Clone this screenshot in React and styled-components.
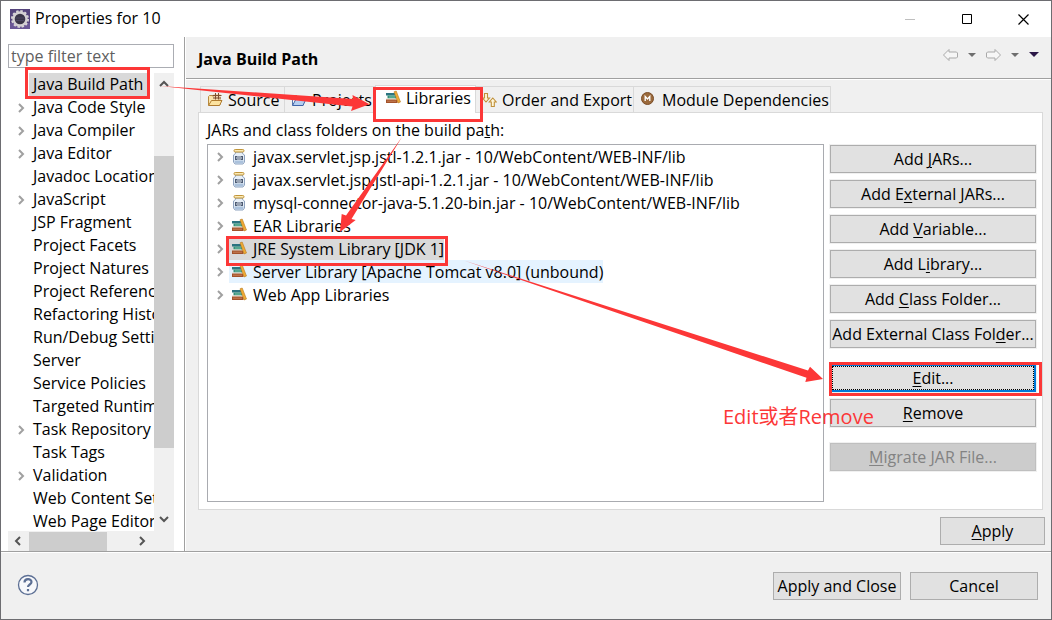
import React from 'react';
import styled, { createGlobalStyle } from 'styled-components';

const Global = createGlobalStyle`
  * { box-sizing: border-box; }
  body { margin: 0; background: #fff; color: #000; font-family: "Open Sans", "Noto Sans CJK SC", sans-serif; font-size: 16px; }
  button, input { font: inherit; color: inherit; }
  svg { display: block; flex: none; }
`;
const Window = styled.div`
  position: relative; display: flex; flex-direction: column; height: 100vh; border: 1px solid #6d6d71; background: #f0f0f0; overflow: hidden;
`;
const TitleBar = styled.header`
  display: flex; align-items: center; height: 36px; padding: 0 8px 0 9px; background: #fff;
  h1 { flex: 1; margin: 0 0 2px 5px; font-size: 16px; font-weight: 400; }
`;
const Caption = styled.button`
  display: grid; place-items: center; width: 57px; height: 34px; padding: 0; border: 0; background: none;
  &:last-child { margin-right: -9px; }
`;
const Body = styled.div` display: flex; flex: 1; min-height: 0; `;
const Side = styled.aside`
  display: flex; flex-direction: column; width: 184px; padding: 7px 10px 0 7px; background: #fff; border-right: 1px solid #a0a0a0;
`;
const Filter = styled.input`
  width: 100%; height: 24px; padding: 0 2px; border: 1px solid #abadb3; border-radius: 0; outline: 0; background: #fff;
  &::placeholder { color: #5f5f5f; opacity: 1; }
`;
const TreeWrap = styled.div` display: flex; flex: 1; min-height: 0; margin-top: 5px; `;
const Tree = styled.ul` flex: 1; min-width: 0; margin: 0; padding: 0; list-style: none; overflow: hidden; `;
const TreeRow = styled.li`
  display: flex; align-items: center; height: 23px; white-space: nowrap;
  span { padding: 0 4px; line-height: 23px; background: ${p => p.$on ? '#d9d9d9' : 'none'}; }
`;
const Twisty = styled.div`
  display: flex; flex: none; align-items: center; justify-content: center; width: ${p => p.$w}px; padding-left: ${p => p.$inset || 0}px;
`;
const VBar = styled.div`
  display: flex; flex-direction: column; align-items: center; justify-content: space-between; width: 20px; padding: 6px 0 7px; background: #f0f0f0;
`;
const VThumb = styled.div` width: 20px; height: 292px; margin-top: 1px; background: #cdcdcd; `;
const HBar = styled.div` display: flex; align-items: center; height: 20px; padding: 0 27px 0 5px; background: #f0f0f0; `;
const HThumb = styled.div` width: 78px; height: 19px; margin: 0 auto 0 6px; background: #cdcdcd; `;
const Main = styled.main` display: flex; flex: 1; flex-direction: column; min-width: 0; border-left: 1px solid #fff; `;
const Head = styled.div`
  display: flex; align-items: center; justify-content: space-between; height: 42px; padding: 0 12px; border-bottom: 1px solid #a0a0a0; box-shadow: 0 1px #fff;
  h2 { margin: 2px 0 0; font-size: 16px; font-weight: 700; }
`;
const Nav = styled.div`
  display: flex; align-items: center; gap: 10px; margin-bottom: 6px;
  button { display: block; padding: 0; border: 0; background: none; }
`;
const Content = styled.div` display: flex; flex: 1; flex-direction: column; min-height: 0; padding: 5px 6px 6px 12px; `;
const Tabs = styled.div` display: flex; align-items: flex-end; height: 28px; padding-left: 2px; `;
const Tab = styled.button`
  display: flex; align-items: center; gap: ${p => p.$gap || 5}px; width: ${p => p.$w}px; height: 26px; padding: 0 0 0 6px; border: 1px solid #d9d9d9; border-width: 1px 1px 0 0; background: #f0f0f0; white-space: nowrap;
  &:first-child { border-left-width: 1px; }
  &[aria-selected='true'] { z-index: 1; height: 28px; margin: 0 0 -1px -1px; padding: 0 0 3px 9px; border-left-width: 1px; background: #fff; }
`;
const Panel = styled.section`
  display: flex; flex: 1; flex-direction: column; min-height: 0; margin-right: 2px; padding: 6px 5px 7px 8px; border: 1px solid #d9d9d9; background: #fff;
`;
const PanelLabel = styled.div` height: 25px; line-height: 22px; `;
const Columns = styled.div` display: flex; flex: 1; gap: 5px; min-height: 0; `;
const List = styled.ul`
  flex: 1; min-width: 0; margin: 0; padding: 0 3px; border: 1px solid #a9abb0; list-style: none; overflow: hidden;
`;
const Entry = styled.li`
  display: flex; align-items: center; height: 23px; white-space: nowrap;
  span { display: flex; align-items: center; gap: 6px; height: 23px; padding-left: 2px; background: ${p => p.$bg || 'none'}; }
`;
const Actions = styled.div` display: flex; flex-direction: column; gap: 7px; width: 208px; padding: 1px 1px 0; `;
const Button = styled.button`
  height: 28px; min-width: ${p => p.$w || 0}px; margin-top: ${p => p.$apart ? 9 : 0}px; padding: 0; border: 1px solid #adadad; border-radius: 0; background: #e1e1e1; box-shadow: 0 0 0 1px #f0f0f0; white-space: nowrap;
  &:disabled { color: #838383; background: #ccc; border-color: #bfbfbf; }
  &[data-default='true'] { border: 2px solid #0078d7; outline: 1px dotted #000; outline-offset: -3px; }
  u { text-decoration-thickness: 1px; text-underline-offset: 2px; }
`;
const ApplyRow = styled.div` display: flex; justify-content: flex-end; padding-top: 7px; `;
const Footer = styled.footer`
  display: flex; align-items: center; gap: 9px; height: 68px; padding: 0 13px 0 16px; border-top: 1px solid #a0a0a0; box-shadow: inset 0 1px #fff;
`;
const Help = styled.button` margin: 0 auto 2px 0; padding: 0; border: 0; background: none; `;
const Marks = styled.div` position: absolute; inset: -1px; z-index: 2; pointer-events: none; `;
const Frame = styled.div`
  position: absolute; left: ${p => p.$x}px; top: ${p => p.$y}px; width: ${p => p.$w}px; height: ${p => p.$h}px; border: 3px solid #fc3737;
`;
const Note = styled.p`
  position: absolute; left: 723px; top: 403px; margin: 0; color: #fc3737; font-size: 20px; line-height: 28px; white-space: nowrap;
`;
const Arrows = styled.svg` position: absolute; left: 0; top: 0; `;

const Chevron = ({ dir = 'right', color = '#a0a0a0', size = 10, w = 2 }) => (
  <svg width={size} height={size} viewBox="0 0 10 10" fill="none" stroke={color} strokeWidth={w}>
    <path d={{ right: 'M3 1l4 4-4 4', left: 'M7 1L3 5l4 4', up: 'M1 7l4-4 4 4', down: 'M1 3l4 4 4-4' }[dir]} />
  </svg>
);
const Gear = () => (
  <svg width="20" height="20" viewBox="0 0 20 20">
    <rect width="20" height="20" fill="#55447c" />
    <path d="M0 14h20v6H0z" fill="#6b5796" />
    <circle cx="10" cy="10" r="8" fill="none" stroke="#d9d6d8" strokeWidth="2" strokeDasharray="2.4 1.8" />
    <circle cx="10" cy="10" r="6.5" fill="#3a3547" stroke="#d4d0d2" strokeWidth="2.4" />
    <path d="M5.500 9h9M5.500 11.500h9" stroke="#4b4560" />
  </svg>
);
const Books = () => (
  <svg width="16" height="16" viewBox="0 0 16 16">
    <path d="M1 3h9.500v2.500H1z" fill="#2c7480" />
    <path d="M2.500 5.500h8.500v3H2.500z" fill="#35917a" /><path d="M4 7h6" stroke="#77bfa6" />
    <path d="M1 8.500h9v1H1z" fill="#e9dcc6" />
    <path d="M1 9.500h11.500v3.500H1z" fill="#a3522a" /><path d="M2 11.200h9" stroke="#c98258" />
    <path d="M9 1.800l2.200-.8L15.500 12l-2.400 1z" fill="#f0ab35" stroke="#b97a1e" strokeWidth=".6" />
  </svg>
);
const Jar = () => (
  <svg width="16" height="16" viewBox="0 0 16 16">
    <path d="M4.500 3h7v1.500L13.500 6v7l-1.500 2H4l-1.500-2V6l2-1.500z" fill="#e6eef7" stroke="#8fa3bf" />
    <path d="M3.500 11.500h9v1.500L11.500 14.500h-7L3.500 13z" fill="#aac1dc" />
    <rect x="3" y=".5" width="10" height="2.500" rx="1.200" fill="#fbe9b4" stroke="#c0953a" />
    <g fill="none" stroke="#4d5b72"><rect x="4.500" y="7.500" width="1.500" height="3" /><path d="M8 7v4" /><rect x="10" y="7.500" width="1.500" height="3" /></g>
  </svg>
);
const FolderPkg = () => (
  <svg width="16" height="16" viewBox="0 0 16 16">
    <path d="M1.500 13V4.500l1-1h3l1 1.500h6.500v8z" fill="#fbe5ab" stroke="#b88a3e" />
    <path d="M6.500 2h7v5.500h-7z" fill="#f1d5b0" />
    <path d="M8.500 1v6.500M11.500 1v6.500M5.500 3.500h9M6 6h8" stroke="#7e5030" />
    <path d="M1.500 13.500L4.500 8.500h10.500l-2.500 5z" fill="#fce3a0" stroke="#b07c30" />
  </svg>
);
const Folder = () => (
  <svg width="16" height="16" viewBox="0 0 16 16">
    <path d="M1.500 13V3.500h4l1 1.500h6v8z" fill="#fff" stroke="#5674ab" />
    <path d="M1.500 13.500L5 7h10l-3 6.500z" fill="#b5cef0" stroke="#3e64a8" />
    <path d="M1.500 3.500h4l1 1.500" fill="none" stroke="#c99a3d" />
  </svg>
);
const Order = () => (
  <svg width="15" height="16" viewBox="0 0 15 16" fill="#fff6da" stroke="#c0913a" strokeWidth="1.100">
    <path d="M2.500 1.500h3V6h2L4 10 .5 6h2z" /><path d="M9.300 14.500h3V10h2l-3.500-4-3.500 4h2z" />
  </svg>
);
const Module = () => (
  <svg width="15" height="15" viewBox="0 0 15 15">
    <circle cx="7.500" cy="6.500" r="6" fill="#9b6a3c" stroke="#7a4c26" />
    <path d="M5.200 9V4.500L7.500 7l2.300-2.500V9" fill="none" stroke="#fff" strokeWidth="1.300" />
  </svg>
);
const NavArrow = ({ flip }) => (
  <svg width="15" height="12" viewBox="0 0 15 12">
    <path d={flip ? 'M14.500 6L9 .500V3H1.500L.500 4v4l1 1H9v2.500z' : 'M.500 6L6 .500V3h7.500l1 1v4l-1 1H6v2.500z'} fill="#f6f6f6" stroke="#a9a9a9" />
  </svg>
);
const Caret = ({ color = '#6e6e6e', w = 8, h = 4 }) => (
  <svg width={w} height={h} viewBox="0 0 8 4" preserveAspectRatio="none"><path d="M0 0h8L4 4z" fill={color} /></svg>
);

const pages = [
  ['Java Build Path', 0, 1], ['Java Code Style', 1], ['Java Compiler', 1], ['Java Editor', 1], ['Javadoc Location'], ['JavaScript', 1],
  ['JSP Fragment'], ['Project Facets'], ['Project Natures'], ['Project References'], ['Refactoring History'], ['Run/Debug Settings'],
  ['Server'], ['Service Policies'], ['Targeted Runtimes'], ['Task Repository', 1], ['Task Tags'], ['Validation', 1],
  ['Web Content Settings'], ['Web Page Editor'],
];
const entries = [
  ['javax.servlet.jsp.jstl-1.2.1.jar - 10/WebContent/WEB-INF/lib', Jar], ['javax.servlet.jsp.jstl-api-1.2.1.jar - 10/WebContent/WEB-INF/lib', Jar],
  ['mysql-connector-java-5.1.20-bin.jar - 10/WebContent/WEB-INF/lib', Jar], ['EAR Libraries', Books],
  ['JRE System Library [JDK 1]', Books, '#d9d9d9'], ['Server Library [Apache Tomcat v8.0] (unbound)', Books, '#e5f3ff'], ['Web App Libraries', Books],
];

export default function App() {
  return (
    <>
      <Global />
      <Window>
        <TitleBar>
          <Gear /><h1>Properties for 10</h1>
          <Caption aria-label="Minimize"><svg width="10" height="10"><path d="M0 5.500h10" stroke="#bfbfbf" /></svg></Caption>
          <Caption aria-label="Maximize"><svg width="10" height="10"><path d="M.5.500h9v9h-9z" fill="none" stroke="#000" /></svg></Caption>
          <Caption aria-label="Close"><svg width="11" height="11"><path d="M.5.500l10 10m0-10l-10 10" stroke="#000" strokeWidth="1.200" /></svg></Caption>
        </TitleBar>
        <Body>
          <Side>
            <Filter aria-label="Filter" placeholder="type filter text" />
            <TreeWrap>
              <Tree>
                {pages.map(([t, open, on]) => (
                  <TreeRow key={t} $on={on}><Twisty $w={21} $inset={4}>{open ? <Chevron /> : null}</Twisty><span>{t}</span></TreeRow>
                ))}
              </Tree>
              <VBar>
                <Chevron dir="up" color="#555" /><VThumb /><Chevron dir="down" color="#555" />
              </VBar>
            </TreeWrap>
            <HBar><Chevron dir="left" color="#555" /><HThumb /><Chevron dir="right" color="#555" /></HBar>
          </Side>
          <Main>
            <Head>
              <h2>Java Build Path</h2>
              <Nav>
                <button aria-label="Back"><NavArrow /></button><button aria-label="Back history"><Caret /></button>
                <button aria-label="Forward"><NavArrow flip /></button><button aria-label="Forward history"><Caret /></button>
                <button aria-label="Menu"><Caret color="#2b1747" w={10} h={5} /></button>
              </Nav>
            </Head>
            <Content>
              <Tabs role="tablist">
                <Tab role="tab" $w={85}><FolderPkg />Source</Tab>
                <Tab role="tab" $w={91}><Folder />Projects</Tab>
                <Tab role="tab" aria-selected="true" $w={101}><Books />Libraries</Tab>
                <Tab role="tab" $w={158}><Order />Order and Export</Tab>
                <Tab role="tab" $w={197} $gap={7}><Module />Module Dependencies</Tab>
              </Tabs>
              <Panel>
                <PanelLabel>JARs and class folders on the build pa<u>t</u>h:</PanelLabel>
                <Columns>
                  <List>
                    {entries.map(([t, Icon, bg]) => (
                      <Entry key={t} $bg={bg}><Twisty $w={18}><Chevron /></Twisty><span><Icon />{t}</span></Entry>
                    ))}
                  </List>
                  <Actions>
                    <Button>Add <u>J</u>ARs...</Button>
                    <Button>Add E<u>x</u>ternal JARs...</Button>
                    <Button>Add <u>V</u>ariable...</Button>
                    <Button>Add L<u>i</u>brary...</Button>
                    <Button>Add <u>C</u>lass Folder...</Button>
                    <Button>Add External Class Fol<u>d</u>er...</Button>
                    <Button $apart data-default="true"><u>E</u>dit...</Button>
                    <Button><u>R</u>emove</Button>
                    <Button $apart disabled><u>M</u>igrate JAR File...</Button>
                  </Actions>
                </Columns>
              </Panel>
              <ApplyRow><Button $w={105}><u>A</u>pply</Button></ApplyRow>
            </Content>
          </Main>
        </Body>
        <Footer>
          <Help aria-label="Help">
            <svg width="22" height="22" viewBox="0 0 22 22" fill="none" stroke="#5c6f94">
              <circle cx="11" cy="11" r="9.500" fill="#f7f8fb" strokeWidth="1.300" />
              <path d="M7.500 8.500c0-4.500 7-4.500 7-.500 0 2.500-3.500 2.500-3.500 5M11 15v2.200" strokeWidth="2.200" />
            </svg>
          </Help>
          <Button $w={128}>Apply and Close</Button>
          <Button $w={128}>Cancel</Button>
        </Footer>
        <Marks>
          <Arrows width="1052" height="620" fill="#fc3737">
            <path d="M160 86L353 99 352.500 95 369.500 104.300 351 111 352.500 106.500z" />
            <path d="M402 137L351.500 219 355.700 220 340 232 341.700 214 346 215.500z" />
            <path d="M464 260.500L808 370.500 810 366.700 823 379 805.300 382 806.500 377.700z" />
          </Arrows>
          <Frame $x={25} $y={67} $w={125} $h={32} />
          <Frame $x={373} $y={87} $w={110} $h={35} />
          <Frame $x={226} $y={236} $w={222} $h={30} />
          <Frame $x={829} $y={362} $w={213} $h={34} />
          <Note>Edit或者Remove</Note>
        </Marks>
      </Window>
    </>
  );
}
